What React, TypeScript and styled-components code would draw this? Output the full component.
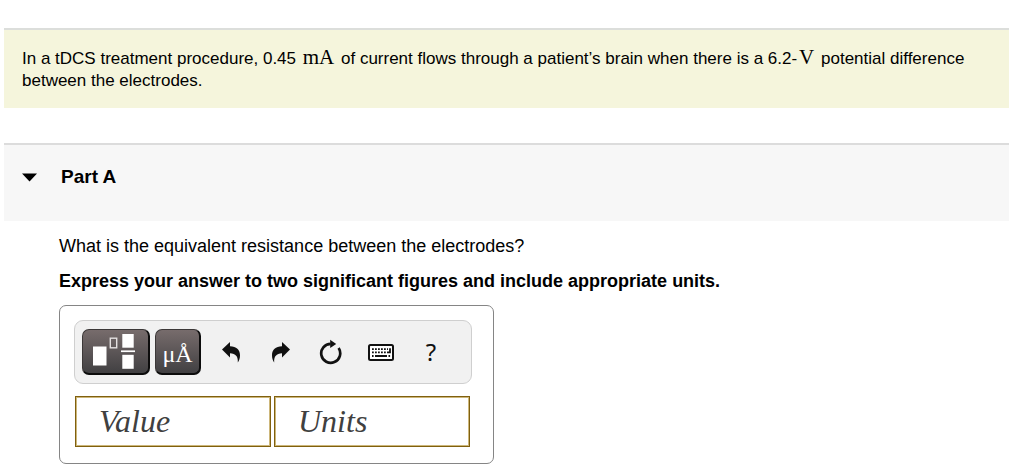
import React from "react";
import styled, { createGlobalStyle } from "styled-components";

const GlobalStyle = createGlobalStyle`
  *, *::before, *::after { box-sizing: border-box; }
  body {
    margin: 0;
    background: #ffffff;
    color: #000000;
    font-family: "Liberation Sans", Arial, sans-serif;
    font-size: 18px;
    line-height: 22px;
  }
`;

const Page = styled.main`
  padding: 28px 15px 0 4px;
`;

const Problem = styled.section`
  padding: 17px 12px 16px 18px;
  border-top: 2px solid #dcdedb;
  background: #f5f5dc;
`;

const Paragraph = styled.p<{ $compact?: boolean }>`
  margin: 0;
  font-size: ${(p) => (p.$compact ? 17 : 18)}px;
`;

const Unit = styled.span`
  margin: 0 2px;
  font-family: "Liberation Serif", "Times New Roman", serif;
  font-size: 21px;
  line-height: 20px;
`;

const PartHeader = styled.header`
  margin-top: 35px;
  height: 78px;
  padding: 0 18px 12px;
  display: flex;
  align-items: center;
  border-top: 2px solid #dcdcdc;
  background: #f7f7f7;
`;

const Toggle = styled.button`
  display: flex;
  align-items: center;
  gap: 24px;
  padding: 0;
  border: 0;
  background: none;
  color: inherit;
  font: inherit;
  font-size: 19px;
  font-weight: bold;
  cursor: pointer;
`;

const PartBody = styled.section`
  padding: 14px 0 0 55px;
`;

const Instruction = styled.p`
  margin: 13px 0;
  font-weight: bold;
`;

const Editor = styled.form`
  width: fit-content;
  padding: 14px 21px 16px 14px;
  border: 1px solid #858585;
  border-radius: 7px;
`;

const Toolbar = styled.div`
  display: flex;
  align-items: center;
  height: 64px;
  width: 398px;
  padding: 0 7px;
  border: 1px solid #cfcfcf;
  border-radius: 9px;
  background: #f1f1f1;
`;

const DarkButton = styled.button<{ $wide?: boolean }>`
  display: flex;
  align-items: center;
  justify-content: center;
  width: ${(p) => (p.$wide ? 68 : 46)}px;
  height: 46px;
  margin-right: 5px;
  padding: ${(p) => (p.$wide ? "0 3px 0 0" : "5px 0 0")};
  border: 1px solid #3c3838;
  border-right: 2px solid #0c0c0c;
  border-bottom: 2px solid #0c0c0c;
  border-radius: 7px;
  background: linear-gradient(#776c6c, #414042);
  color: #ffffff;
  font-family: "Liberation Serif", "Times New Roman", serif;
  font-size: 24px;
  line-height: 32px;
  cursor: pointer;
`;

const IconButton = styled.button`
  display: flex;
  align-items: center;
  justify-content: center;
  width: 50px;
  height: 46px;
  padding: 0;
  border: 0;
  background: none;
  color: #111111;
  font-family: "Noto Sans", sans-serif;
  font-size: 24px;
  line-height: 32px;
  cursor: pointer;
`;

const Fields = styled.div`
  display: flex;
  gap: 3px;
  margin-top: 12px;
  padding-left: 1px;
`;

const Field = styled.input`
  width: 196px;
  height: 51px;
  padding: 0 23px;
  border: 1px solid #80600f;
  border-radius: 0;
  box-shadow: inset 0 0 0 1px #cdb77a;
  background: #ffffff;
  color: #404040;
  font-family: "Liberation Serif", "Times New Roman", serif;
  font-size: 32px;
  font-style: italic;
  &::placeholder { color: #404040; opacity: 1; }
`;

const TriangleIcon = () => (
  <svg width="15" height="9" viewBox="0 0 15 9" aria-hidden="true">
    <path d="M0 0.5H15L7.5 8.5Z" fill="#000" />
  </svg>
);

const TemplateIcon = () => (
  <svg width="42" height="35" viewBox="0 0 42 35" aria-hidden="true">
    <rect x="0" y="12.5" width="13.5" height="19" fill="#fff" />
    <rect x="17.3" y="4.2" width="6.4" height="9.6" fill="none" stroke="#e4e0e0" strokeWidth="1.4" />
    <rect x="29.3" y="0" width="11.4" height="13.7" fill="#fff" />
    <rect x="28" y="16.4" width="14" height="1.7" fill="#fff" />
    <rect x="29.3" y="20.8" width="11.4" height="14" fill="#fff" />
  </svg>
);

const UndoIcon = ({ flip = false }: { flip?: boolean }) => (
  <svg width="18" height="21" viewBox="0 0 18 21" aria-hidden="true">
    <path
      transform={flip ? "translate(18 0) scale(-1 1)" : undefined}
      d="M0 7.6 8 0V4.3C14.4 4.3 18 8 18 13.2 18 16.2 17.2 18.6 15.8 20.4 16.2 14.3 13.6 11.6 8 11.3V15.4Z"
      fill="#111"
    />
  </svg>
);

const ResetIcon = () => (
  <svg width="24" height="26" viewBox="0 0 24 26" aria-hidden="true">
    <path d="M19.6 9A9.5 9.5 0 1 1 11.7 4.8" fill="none" stroke="#111" strokeWidth="2.7" />
    <path d="M11.2 0.8 17.2 4.9 11.2 9Z" fill="#111" />
  </svg>
);

const KeyboardIcon = () => (
  <svg width="26" height="17" viewBox="0 0 26 17" aria-hidden="true">
    <rect x="1" y="1" width="24" height="15" rx="1.5" fill="#fff" stroke="#111" strokeWidth="2" />
    <path d="M4 5.2H20M4 8.4H18" stroke="#111" strokeWidth="1.8" strokeDasharray="1.8 1.2" />
    <path d="M19 8.4H22V4.3M7 12H19" fill="none" stroke="#111" strokeWidth="1.8" />
    <path d="M4 12H5.6M20.5 12H22.1" stroke="#111" strokeWidth="1.8" />
  </svg>
);

export default function App() {
  return (
    <>
      <GlobalStyle />
      <Page>
        <Problem>
          <Paragraph $compact>
            In a tDCS treatment procedure, 0.45 <Unit>mA</Unit> of current flows through a
            patient’s brain when there is a 6.2-<Unit>V</Unit> potential difference between the
            electrodes.
          </Paragraph>
        </Problem>
        <PartHeader>
          <Toggle type="button" aria-expanded="true">
            <TriangleIcon />
            Part A
          </Toggle>
        </PartHeader>
        <PartBody>
          <Paragraph>What is the equivalent resistance between the electrodes?</Paragraph>
          <Instruction>
            Express your answer to two significant figures and include appropriate units.
          </Instruction>
          <Editor>
            <Toolbar role="toolbar" aria-label="Answer tools">
              <DarkButton type="button" $wide aria-label="Templates">
                <TemplateIcon />
              </DarkButton>
              <DarkButton type="button" aria-label="Unit symbols">
                μÅ
              </DarkButton>
              <IconButton type="button" aria-label="Undo">
                <UndoIcon />
              </IconButton>
              <IconButton type="button" aria-label="Redo">
                <UndoIcon flip />
              </IconButton>
              <IconButton type="button" aria-label="Reset">
                <ResetIcon />
              </IconButton>
              <IconButton type="button" aria-label="Keyboard shortcuts">
                <KeyboardIcon />
              </IconButton>
              <IconButton type="button" aria-label="Help">
                ?
              </IconButton>
            </Toolbar>
            <Fields>
              <Field type="text" placeholder="Value" aria-label="Value" />
              <Field type="text" placeholder="Units" aria-label="Units" />
            </Fields>
          </Editor>
        </PartBody>
      </Page>
    </>
  );
}
